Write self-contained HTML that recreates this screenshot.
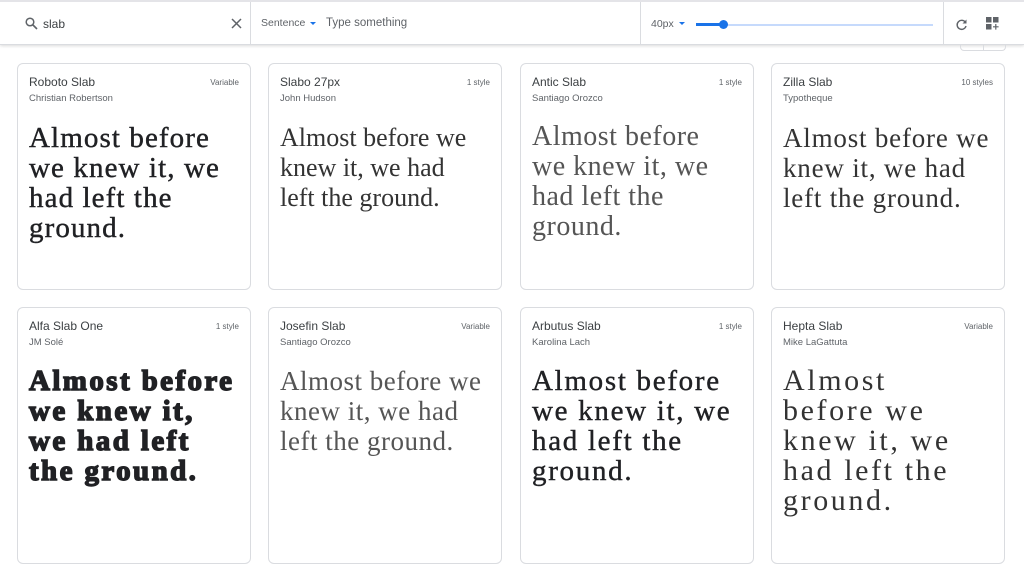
<!DOCTYPE html>
<html><head><meta charset="utf-8"><style>
*{margin:0;padding:0;box-sizing:border-box}
body{width:1024px;height:575px;background:#fff;font-family:"Liberation Sans",sans-serif;position:relative;overflow:hidden;color:#3c4043}
.bar{position:absolute;left:0;top:0;width:1024px;height:45px;border-top:2px solid #e4e4e8;border-bottom:1px solid #dadce0;box-shadow:0 1px 3px rgba(0,0,0,.15);background:#fff}
.vl{position:absolute;top:0;height:43px;width:1px;background:#dadce0}
.t{position:absolute;font-size:11px;color:#5f6368;white-space:nowrap}
.card{position:absolute;width:234px;border:1px solid #dadce0;border-radius:6px;background:#fff}
.nm{position:absolute;left:11px;top:11px;font-size:12px;color:#3c4043}
.au{position:absolute;left:11px;top:29px;font-size:9.5px;color:#5f6368}
.st{position:absolute;right:11px;top:14px;font-size:8px;color:#5f6368}
.pv{position:absolute;left:11px;font-family:"Liberation Serif",serif;font-size:30px;line-height:30px;white-space:nowrap;color:#202124}
</style></head><body>
<div class="bar">
<svg style="position:absolute;left:25px;top:15px" width="13" height="13" viewBox="0 0 13 13"><circle cx="5" cy="5" r="3.8" fill="none" stroke="#5f6368" stroke-width="1.5"/><path d="M8 8l4 4" stroke="#5f6368" stroke-width="1.6"/></svg>
<div class="t" style="left:43px;top:15px;font-size:12px;color:#3c4043">slab</div>
<svg style="position:absolute;left:231px;top:16px" width="11" height="11" viewBox="0 0 11 11"><path d="M1 1l9 9M10 1l-9 9" stroke="#5f6368" stroke-width="1.5"/></svg>
<div class="vl" style="left:250px"></div>
<div class="t" style="left:261px;top:15px;font-size:10.5px">Sentence</div>
<div style="position:absolute;left:310px;top:20px;border-left:3px solid transparent;border-right:3px solid transparent;border-top:3px solid #1a73e8"></div>
<div class="t" style="left:326px;top:15px;font-size:11.5px">Type something</div>
<div class="vl" style="left:640px"></div>
<div class="t" style="left:651px;top:16px;font-size:10.5px">40px</div>
<div style="position:absolute;left:679px;top:20px;border-left:3px solid transparent;border-right:3px solid transparent;border-top:3px solid #1a73e8"></div>
<div style="position:absolute;left:696px;top:22px;width:237px;height:2px;background:#c6dafc"></div>
<div style="position:absolute;left:696px;top:21px;width:28px;height:3px;background:#1a73e8"></div>
<div style="position:absolute;left:719px;top:18px;width:9px;height:9px;border-radius:50%;background:#1a73e8"></div>
<div class="vl" style="left:943px"></div>
<svg style="position:absolute;left:955px;top:16px" width="13" height="13" viewBox="0 0 13 13"><path d="M10.5 4.5A4.5 4.5 0 1 0 11 8" fill="none" stroke="#5f6368" stroke-width="1.4"/><path d="M11.5 1.5v4h-4z" fill="#5f6368"/></svg>
<svg style="position:absolute;left:986px;top:15px" width="14" height="14" viewBox="0 0 14 14" fill="#5f6368"><rect x="0" y="0" width="5.5" height="5.5"/><rect x="7" y="0" width="5.5" height="5.5"/><rect x="0" y="7" width="5.5" height="5.5"/><path d="M9.2 7h1.2v2.2h2.2v1.2h-2.2v2.2H9.2v-2.2H7V9.2h2.2z"/></svg>
</div>
<div style="position:absolute;left:960px;top:45px;width:46px;height:6px;border:1px solid #dadce0;border-top:none;border-radius:0 0 4px 4px"></div>
<div style="position:absolute;left:983px;top:45px;width:1px;height:6px;background:#dadce0"></div>

<div class="card" style="left:17px;top:63px;height:227px"><div class="nm">Roboto Slab</div><div class="au">Christian Robertson</div><div class="st">Variable</div>
<div class="pv" style="top:59px;font-size:29px;letter-spacing:1.1px;-webkit-text-stroke:.4px #202124">Almost before<br>we knew it, we<br>had left the<br>ground.</div></div>
<div class="card" style="left:268px;top:63px;height:227px"><div class="nm">Slabo 27px</div><div class="au">John Hudson</div><div class="st">1 style</div>
<div class="pv" style="top:59px;font-size:26px;color:#333">Almost before we<br>knew it, we had<br>left the ground.</div></div>
<div class="card" style="left:520px;top:63px;height:227px"><div class="nm">Antic Slab</div><div class="au">Santiago Orozco</div><div class="st">1 style</div>
<div class="pv" style="top:58px;font-size:28px;color:#555;letter-spacing:.5px">Almost before<br>we knew it, we<br>had left the<br>ground.</div></div>
<div class="card" style="left:771px;top:63px;height:227px"><div class="nm">Zilla Slab</div><div class="au">Typotheque</div><div class="st">10 styles</div>
<div class="pv" style="top:59px;font-size:27px;color:#333;letter-spacing:.8px">Almost before we<br>knew it, we had<br>left the ground.</div></div>

<div class="card" style="left:17px;top:307px;height:257px"><div class="nm">Alfa Slab One</div><div class="au">JM Solé</div><div class="st">1 style</div>
<div class="pv" style="top:58px;font-size:29px;font-weight:bold;color:#202124;letter-spacing:2.4px;-webkit-text-stroke:1.4px #202124">Almost before<br>we knew it,<br>we had left<br>the ground.</div></div>
<div class="card" style="left:268px;top:307px;height:257px"><div class="nm">Josefin Slab</div><div class="au">Santiago Orozco</div><div class="st">Variable</div>
<div class="pv" style="top:58px;font-size:27px;color:#555;letter-spacing:.5px">Almost before we<br>knew it, we had<br>left the ground.</div></div>
<div class="card" style="left:520px;top:307px;height:257px"><div class="nm">Arbutus Slab</div><div class="au">Karolina Lach</div><div class="st">1 style</div>
<div class="pv" style="top:58px;font-size:29px;letter-spacing:1.7px;color:#202124;-webkit-text-stroke:.4px #202124">Almost before<br>we knew it, we<br>had left the<br>ground.</div></div>
<div class="card" style="left:771px;top:307px;height:257px"><div class="nm">Hepta Slab</div><div class="au">Mike LaGattuta</div><div class="st">Variable</div>
<div class="pv" style="top:58px;font-size:30px;letter-spacing:2.6px;color:#333">Almost<br>before we<br>knew it, we<br>had left the<br>ground.</div></div>
</body></html>
